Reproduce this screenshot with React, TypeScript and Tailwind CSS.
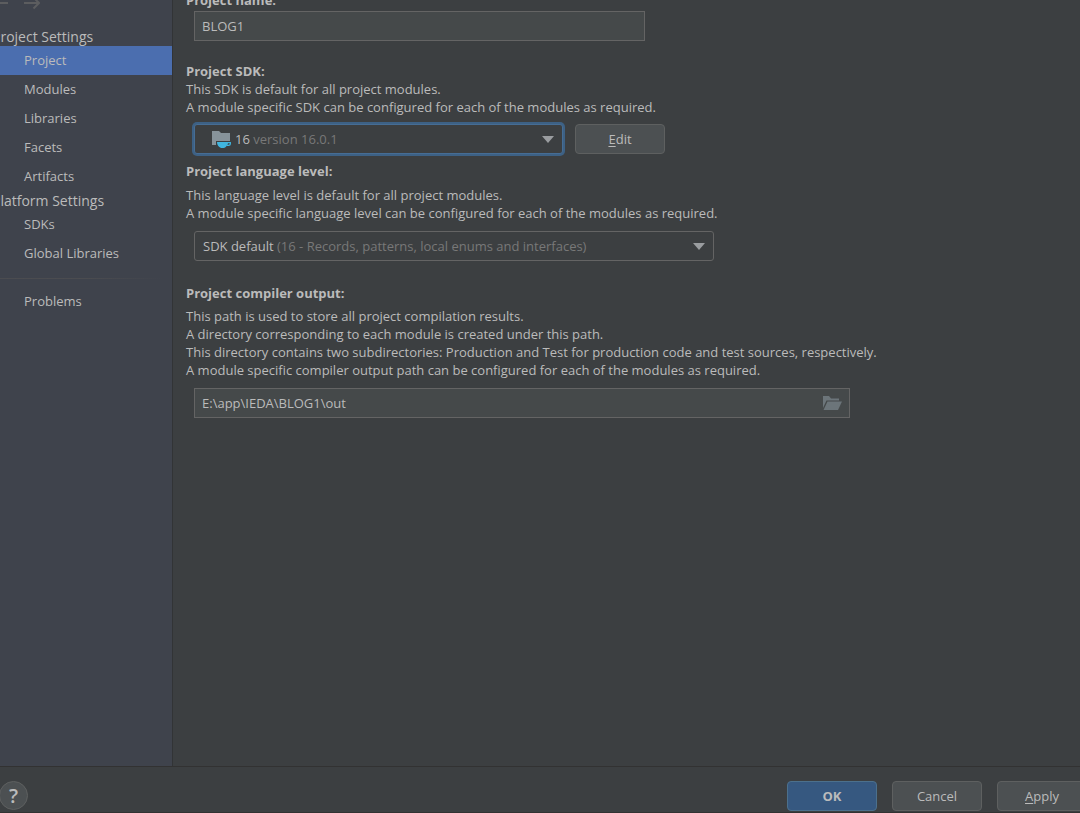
import { useState } from "react";
import type { ReactNode } from "react";
import clsx from "clsx";

const projectSettings = ["Project", "Modules", "Libraries", "Facets", "Artifacts"];
const platformSettings = ["SDKs", "Global Libraries"];

function NavItem({
  label,
  active,
  onSelect,
}: {
  label: string;
  active: boolean;
  onSelect: (label: string) => void;
}) {
  return (
    <li>
      <button
        type="button"
        onClick={() => onSelect(label)}
        className={clsx(
          "block h-[29px] w-full pb-0.5 pl-6 text-left",
          active && "bg-[#4b6eaf]"
        )}
      >
        {label}
      </button>
    </li>
  );
}

function Sidebar() {
  const [selected, setSelected] = useState("Project");

  return (
    <nav className="w-[173px] shrink-0 border-r border-[#323436] bg-[#3f434c]">
      <div className="flex h-[27px] gap-4">
        <button type="button" aria-label="Back" className="-mt-1 -ml-2 h-4 w-4">
          <ArrowIcon flipped />
        </button>
        <button type="button" aria-label="Forward" className="-mt-1 h-4 w-4">
          <ArrowIcon />
        </button>
      </div>
      <h2 className="-ml-2 h-[19px] text-[14px] leading-[19px] whitespace-nowrap">Project Settings</h2>
      <ul>
        {projectSettings.map((label) => (
          <NavItem key={label} label={label} active={label === selected} onSelect={setSelected} />
        ))}
      </ul>
      <h2 className="-ml-2 h-[19px] text-[14px] leading-[19px] whitespace-nowrap">Platform Settings</h2>
      <ul>
        {platformSettings.map((label) => (
          <NavItem key={label} label={label} active={label === selected} onSelect={setSelected} />
        ))}
      </ul>
      <div className="mt-[10px] mb-2 h-px bg-linear-to-r from-[#4b4c50] from-50% to-[#3f434c] to-95%" />
      <ul>
        <NavItem label="Problems" active={selected === "Problems"} onSelect={setSelected} />
      </ul>
    </nav>
  );
}

function ArrowIcon({ flipped }: { flipped?: boolean }) {
  return (
    <svg viewBox="0 0 16 16" className={clsx("h-4 w-4", flipped && "-scale-x-100")} fill="none" stroke="#5c5d5f" strokeWidth="2">
      <path d="M0 7h15M9.500 1.500L15 7l-5.500 5.500" />
    </svg>
  );
}

function SdkIcon() {
  return (
    <svg viewBox="0 0 20 18" className="h-[18px] w-5">
      <path d="M0 1h7l2 2h9v8H4v4H0z" fill="#87939a" />
      <path d="M5 12h11v1c-.3 2.500-2 4-4 5H9c-2.500-1-4-3-4-6z" fill="#40b6e0" />
      <path d="M15 12.700h3.300v1.300c0 .8-.8 1.300-1.800 1.300H15" fill="none" stroke="#40b6e0" strokeWidth="1.300" />
    </svg>
  );
}

function FolderIcon() {
  return (
    <svg viewBox="0 0 19 15" className="h-[15px] w-[19px]" fill="#6c757a">
      <path d="M0 0h6l2 2.500h8v2H3.500L0 12z" />
      <path d="M4.500 5.500H19L15 14H.5z" />
    </svg>
  );
}

// A native select with its closed-state text drawn in two tones.
function ComboBox({
  label,
  icon,
  value,
  detail,
  focused,
  className,
}: {
  label: string;
  icon?: ReactNode;
  value: string;
  detail: string;
  focused?: boolean;
  className: string;
}) {
  return (
    <div className={clsx("grid h-[30px] items-center", className)}>
      <select
        aria-label={label}
        className={clsx(
          "col-start-1 row-start-1 h-full w-full appearance-none rounded-[3px] border bg-[#3c3f41] text-transparent outline-none",
          focused ? "border-[#466d94] ring-2 ring-[#3d6185]" : "border-[#646464]"
        )}
      >
        <option>{`${value} ${detail}`}</option>
      </select>
      <div
        aria-hidden="true"
        className={clsx(
          "pointer-events-none col-start-1 row-start-1 flex items-center pr-[9px]",
          icon ? "pl-[18px]" : "pl-[9px]"
        )}
      >
        {icon}
        <span className={clsx("grow whitespace-pre", icon && "pl-[3px]")}>
          {value} <span className="text-[#787878]">{detail}</span>
        </span>
        <svg viewBox="0 0 12 7" className="h-[7px] w-3" fill="#9a9da0">
          <path d="M0 0h12L6 7z" />
        </svg>
      </div>
    </div>
  );
}

function DialogButton({
  children,
  primary,
}: {
  children: ReactNode;
  primary?: boolean;
}) {
  return (
    <button
      type="button"
      className={clsx(
        "h-[30px] w-[90px] shrink-0 rounded-[4px] border",
        primary
          ? "border-[#4c708c] bg-[#365880] font-bold"
          : "border-[#5e6060] bg-[#4c5052]"
      )}
    >
      {children}
    </button>
  );
}

export default function App() {
  const [name, setName] = useState("BLOG1");
  const [output, setOutput] = useState("E:\\app\\IEDA\\BLOG1\\out");

  return (
    <div className="flex h-screen flex-col overflow-hidden bg-[#3c3f41] font-['Open_Sans','Noto_Sans',sans-serif] text-[13px] leading-[18px] text-[#bbbbbb]">
      <div className="flex min-h-0 grow">
        <Sidebar />

        <main className="min-w-0 grow pl-[13px]">
          <section className="-mt-[9px]">
            <label htmlFor="project-name" className="block font-bold">
              Project name:
            </label>
            <input
              id="project-name"
              value={name}
              onChange={(e) => setName(e.target.value)}
              className="mt-0.5 ml-2 block h-[30px] w-[451px] border border-[#646464] bg-[#45494a] px-[7px] outline-none"
            />
          </section>

          <section className="mt-[21px]">
            <h3 className="font-bold">Project SDK:</h3>
            <p>This SDK is default for all project modules.</p>
            <p>A module specific SDK can be configured for each of the modules as required.</p>
            <div className="mt-2 ml-2 flex gap-3">
              <ComboBox
                label="Project SDK"
                icon={<SdkIcon />}
                value="16"
                detail="version 16.0.1"
                focused
                className="w-[369px]"
              />
              <DialogButton>
                <u className="underline-offset-2">E</u>dit
              </DialogButton>
            </div>
          </section>

          <section className="mt-2">
            <h3 className="font-bold">Project language level:</h3>
            <p className="mt-1.5">This language level is default for all project modules.</p>
            <p>A module specific language level can be configured for each of the modules as required.</p>
            <ComboBox
              label="Project language level"
              value="SDK default"
              detail="(16 - Records, patterns, local enums and interfaces)"
              className="mt-[9px] ml-2 w-[520px]"
            />
          </section>

          <section className="mt-[23px]">
            <h3 className="font-bold">Project compiler output:</h3>
            <p className="mt-[5px]">This path is used to store all project compilation results.</p>
            <p>A directory corresponding to each module is created under this path.</p>
            <p>
              This directory contains two subdirectories: Production and Test for production code and test sources, respectively.
            </p>
            <p>A module specific compiler output path can be configured for each of the modules as required.</p>
            <div className="mt-[9px] ml-2 flex h-[30px] w-[656px] items-center border border-[#646464] bg-[#45494a] pr-[7px]">
              <input
                aria-label="Project compiler output"
                value={output}
                onChange={(e) => setOutput(e.target.value)}
                className="h-full grow px-[7px] outline-none"
              />
              <button type="button" aria-label="Browse">
                <FolderIcon />
              </button>
            </div>
          </section>
        </main>
      </div>

      <footer className="flex h-[47px] shrink-0 items-start border-t border-b border-[#323232] pt-3.5">
        <button
          type="button"
          aria-label="Help"
          className="-ml-px flex h-[29px] w-[29px] items-center justify-center rounded-full border border-[#5e6060] bg-[#4c5052] text-[20px] font-semibold"
        >
          ?
        </button>
        <div className="-mr-[7px] ml-auto flex gap-[15px]">
          <DialogButton primary>OK</DialogButton>
          <DialogButton>Cancel</DialogButton>
          <DialogButton>
            <u className="underline-offset-2">A</u>pply
          </DialogButton>
        </div>
      </footer>
    </div>
  );
}
